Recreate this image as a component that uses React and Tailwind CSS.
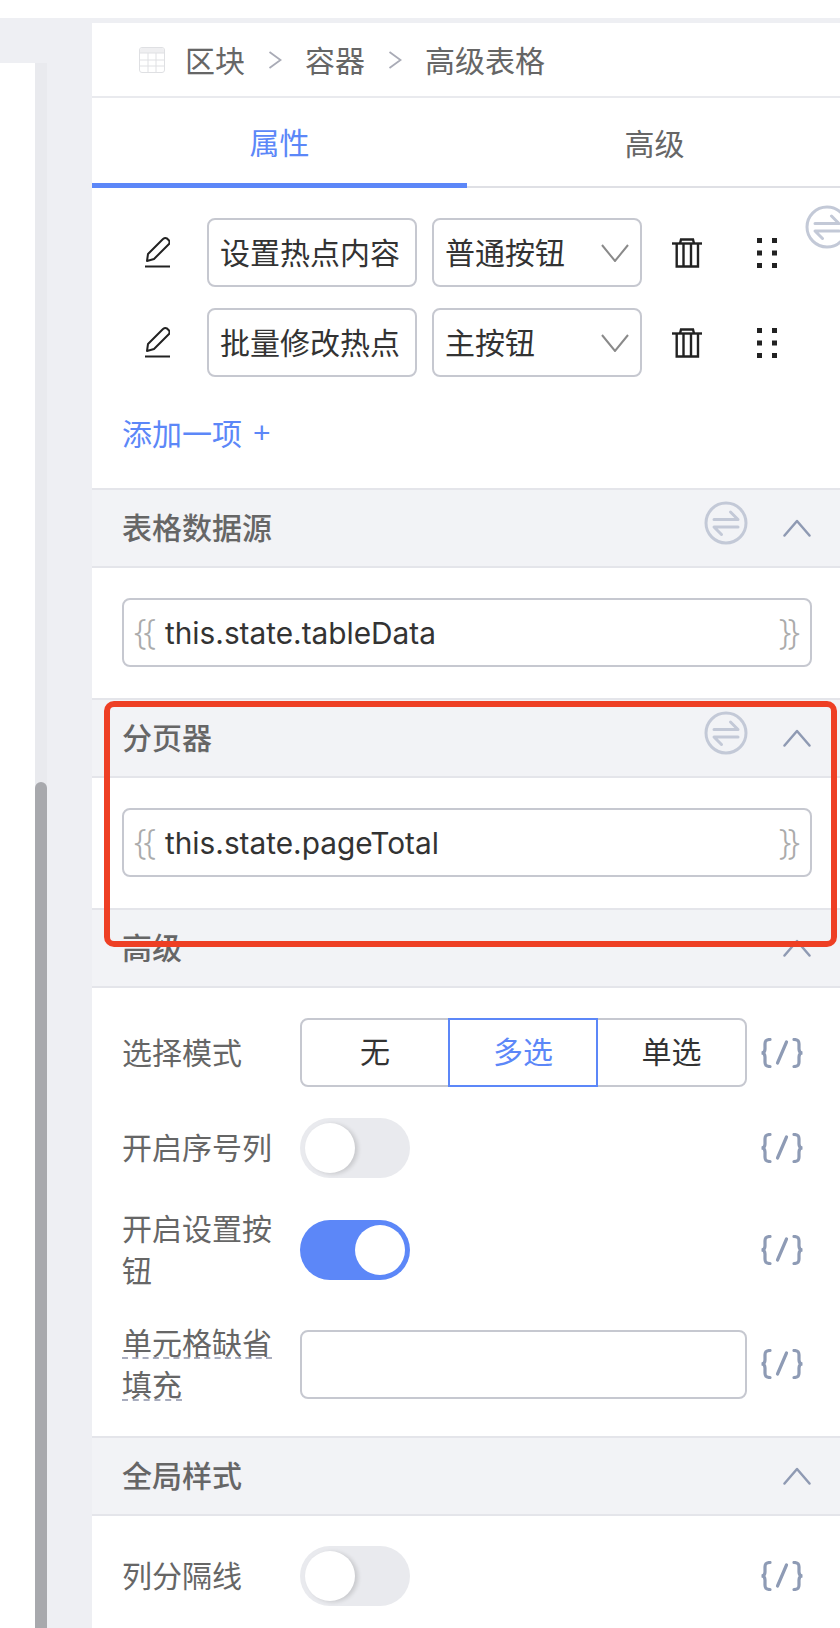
const CJK = "font-['Noto_Sans_CJK_SC',sans-serif]";

function Swap({ className = "" }) {
  return (
    <svg className={className} width="44" height="44" viewBox="0 0 44 44" fill="none" stroke="#c3c9d7" strokeWidth="3" strokeLinecap="round" strokeLinejoin="round">
      <circle cx="22" cy="22" r="20" />
      <path d="M10 18.5H34L26.5 11" />
      <path d="M34 26H10L17.5 33.5" />
    </svg>
  );
}
function ChevUp() {
  return (
    <svg width="28" height="18" viewBox="0 0 28 18" fill="none" stroke="#8f9ab3" strokeWidth="2.5" strokeLinecap="round" strokeLinejoin="round">
      <path d="M1.5 16.5L14 2L26.5 16.5" />
    </svg>
  );
}
function ChevDown() {
  return (
    <svg width="28" height="18" viewBox="0 0 28 18" fill="none" stroke="#8a8a8a" strokeWidth="2">
      <path d="M1 1L14 17L27 1" />
    </svg>
  );
}
function Crumb() {
  return (
    <svg width="14" height="18" viewBox="0 0 14 18" fill="none" stroke="#a9abb6" strokeWidth="1.8">
      <path d="M1.5 1L12.5 9L1.5 17" />
    </svg>
  );
}
function Code() {
  return (
    <svg width="44" height="30" viewBox="0 0 44 30" fill="none" stroke="#8e9bb5" strokeWidth="3.2" strokeLinecap="round">
      <path d="M10 1.5C6 1.5 5 3 5 6V11C5 14 3.5 15 1.5 15C3.5 15 5 16 5 19V24C5 27 6 28.5 10 28.5" />
      <path d="M26.5 4L17.5 25" />
      <path d="M34 1.5C38 1.5 39 3 39 6V11C39 14 40.5 15 42.5 15C40.5 15 39 16 39 19V24C39 27 38 28.5 34 28.5" />
    </svg>
  );
}
function Pencil() {
  return (
    <svg width="25" height="31" viewBox="0 0 25 31" fill="none" stroke="#222" strokeWidth="2" strokeLinejoin="round">
      <path d="M2 24L3 17L18 2Q20 .5 22 1.5L24 3.5Q25 5 24 7L9 22Z" />
      <path d="M0 29.5H25" />
    </svg>
  );
}
function Trash() {
  return (
    <svg width="30" height="30" viewBox="0 0 30 30" fill="none" stroke="#222" strokeWidth="2.4">
      <path d="M0 5.5H30" />
      <path d="M8 5.5L9 1.5H21L22 5.5" />
      <path d="M4.7 5.5V28.5H26V5.5" />
      <path d="M11.5 5.5V28.5M19 5.5V28.5" />
    </svg>
  );
}
function Dots() {
  return (
    <svg width="20" height="30" viewBox="0 0 20 30" fill="#222">
      <rect x="0" y="0" width="5" height="5" /><rect x="15" y="0" width="5" height="5" />
      <rect x="0" y="12.5" width="5" height="5" /><rect x="15" y="12.5" width="5" height="5" />
      <rect x="0" y="25" width="5" height="5" /><rect x="15" y="25" width="5" height="5" />
    </svg>
  );
}
function TableIcon() {
  return (
    <svg width="26" height="26" viewBox="0 0 26 26" fill="none" stroke="#dfe0e3" strokeWidth="1">
      <rect x=".5" y=".5" width="25" height="25" rx="2.5" fill="#fff" />
      <path d="M1 3a2 2 0 0 1 2-2H23a2 2 0 0 1 2 2V6H1Z" fill="#efeff1" stroke="none" />
      <path d="M1 6H25M1 13H25M1 19H25M9 6V25M17 6V25" />
    </svg>
  );
}

function ListRow({ name, type }) {
  return (
    <div className="flex items-center h-[69px] pl-[53px]">
      <Pencil />
      <div className="ml-[37px] w-[210px] h-[69px] border-2 border-[#c6c8d0] rounded-[8px] flex items-center pl-[11px] pb-[3px] text-[30px] text-[#333] whitespace-nowrap">{name}</div>
      <div className="ml-[15px] w-[210px] h-[69px] border-2 border-[#c6c8d0] rounded-[8px] flex items-center justify-between pl-[11px] pr-[11px] text-[30px] text-[#333]">
        <span className="pb-[3px]">{type}</span>
        <ChevDown />
      </div>
      <div className="ml-[30px]"><Trash /></div>
      <div className="ml-[55px]"><Dots /></div>
    </div>
  );
}

function SectionHeader({ title, swap }) {
  return (
    <div className="h-[80px] border-y-2 border-[#e4e5ea] bg-[#f2f3f6] flex items-center pl-[30px] pr-[29px]">
      <span className="flex-1 text-[30px] font-medium text-[#666] pb-[3px]">{title}</span>
      {swap && <Swap className="mr-[35px] mb-[10px] shrink-0" />}
      <ChevUp />
    </div>
  );
}

function BindInput({ value }) {
  return (
    <div className="mt-[30px] mb-[31px] ml-[30px] w-[690px] h-[69px] border-2 border-[#c6c8d0] rounded-[8px] flex items-center pl-[10px] pr-[10px] text-[#ababab] text-[35px] leading-[40px]">
      <span className="font-['Noto_Sans',sans-serif] font-light w-[31px] tracking-[-3px] pb-[3px]">{"{{"}</span>
      <span className="flex-1 font-['Inter',sans-serif] text-[#333] text-[29.8px] leading-[40px]">{value}</span>
      <span className="font-['Noto_Sans',sans-serif] font-light tracking-[-4px] pr-[4px] pb-[3px]">{"}}"}</span>
    </div>
  );
}

function Toggle({ on }) {
  return (
    <div className={on
      ? "w-[110px] h-[60px] rounded-full bg-[#5c87f8] p-[5px] flex justify-end"
      : "w-[110px] h-[60px] rounded-full bg-[#e9eaee] p-[5px] flex justify-start"}>
      <div className={on
        ? "w-[50px] h-[50px] rounded-full bg-white"
        : "w-[50px] h-[50px] rounded-full bg-white shadow-[3px_1px_4px_rgba(0,0,0,0.14)]"} />
    </div>
  );
}

function Field({ label, dashed, children, className = "" }) {
  return (
    <div className={"flex items-center pl-[30px] " + className}>
      <div className="w-[178px] pr-[23px] -translate-y-[2px] text-[30px] leading-[42px] text-[#666] shrink-0">
        {dashed
          ? <span className="underline decoration-dashed decoration-2 decoration-[#a9adbe] underline-offset-[3px] [text-decoration-skip-ink:none]">{label}</span>
          : label}
      </div>
      <div className="w-[447px] shrink-0">{children}</div>
      <div className="ml-[13px] shrink-0"><Code /></div>
    </div>
  );
}

export default function App() {
  return (
    <div className={"relative w-[840px] h-[1628px] overflow-hidden bg-white flex flex-col " + CJK}>
      <div className="h-[18px] shrink-0 bg-white" />
      <div className="flex-1 flex bg-[#eeeff3] min-h-0">
        <div className="w-[92px] shrink-0 flex flex-col">
          <div className="h-[45px] shrink-0" />
          <div className="flex-1 flex">
            <div className="w-[35px] bg-white" />
            <div className="w-[12px] flex flex-col bg-[#e9eaee]">
              <div className="h-[719px] shrink-0" />
              <div className="flex-1 bg-[#a8a9ad] rounded-t-[6px]" />
            </div>
          </div>
        </div>
        <div className="flex-1 flex flex-col mt-[5px] bg-white min-w-0">
          <div className="h-[75px] shrink-0 border-b-2 border-[#e9eaee] flex items-center pl-[47px] text-[30px] text-[#666]">
            <TableIcon />
            <span className="ml-[20px]">区块</span>
            <span className="mx-[23px]"><Crumb /></span>
            <span>容器</span>
            <span className="mx-[23px]"><Crumb /></span>
            <span>高级表格</span>
          </div>
          <div className="flex h-[90px] shrink-0 text-[30px]">
            <div className="w-[375px] pt-[2px] border-b-[5px] border-[#5c87f8] text-[#5c87f8] flex items-center justify-center">属性</div>
            <div className="flex-1 pl-[2px] border-b-2 border-[#dfe0e5] text-[#666] flex items-center justify-center">高级</div>
          </div>
          <div className="relative h-[300px] shrink-0 pt-[30px]">
            <Swap className="absolute right-[-9px] top-[17px]" />
            <div className="flex flex-col gap-[21px]">
              <ListRow name="设置热点内容" type="普通按钮" />
              <ListRow name="批量修改热点" type="主按钮" />
            </div>
            <div className="mt-[34px] pl-[30px] h-[42px] flex items-center text-[30px] text-[#5c87f8]">
              <span>添加一项</span>
              <span className="ml-[11px] font-['Liberation_Sans',sans-serif]">+</span>
            </div>
          </div>
          <SectionHeader title="表格数据源" swap />
          <BindInput value="this.state.tableData" />
          <SectionHeader title="分页器" swap />
          <BindInput value="this.state.pageTotal" />
          <SectionHeader title="高级" />
          <div className="pt-[30px] pb-[30px] flex flex-col gap-[30px] shrink-0">
            <Field label="选择模式" className="h-[70px]">
              <div className="h-[69px] mb-[1px] border-2 border-[#c6c8d0] rounded-[8px] flex text-[30px] text-[#333]">
                <div className="w-[146px] pb-[4px] flex items-center justify-center">无</div>
                <div className="w-[150px] -my-[2px] pb-[4px] border-2 border-[#5c87f8] text-[#5c87f8] flex items-center justify-center">多选</div>
                <div className="flex-1 pb-[4px] flex items-center justify-center">单选</div>
              </div>
            </Field>
            <Field label="开启序号列"><Toggle /></Field>
            <Field label="开启设置按钮"><Toggle on /></Field>
            <Field label="单元格缺省填充" dashed>
              <div className="h-[69px] border-2 border-[#c6c8d0] rounded-[8px]" />
            </Field>
          </div>
          <SectionHeader title="全局样式" />
          <div className="pt-[30px]">
            <Field label="列分隔线"><Toggle /></Field>
          </div>
        </div>
      </div>
      <div className="absolute left-[104px] top-[701px] w-[733px] h-[246px] border-[6px] border-[#ee3f24] rounded-[10px]" />
    </div>
  );
}
